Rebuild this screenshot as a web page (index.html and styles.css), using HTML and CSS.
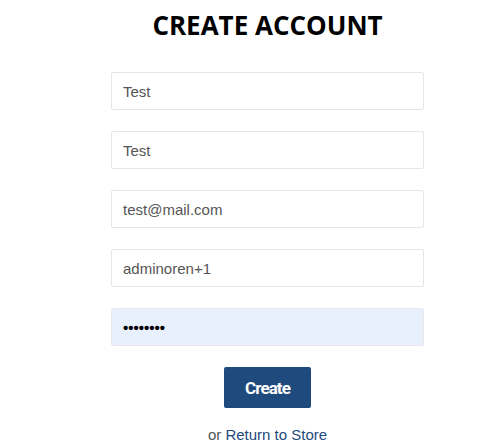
FILE: index.html
```html
<!DOCTYPE html>
<html>
<head>
<meta charset="utf-8">
<link rel="stylesheet" href="styles.css">
</head>
<body>
<div class="page">
  <form class="form">
    <h1 class="title">CREATE ACCOUNT</h1>
    <div class="field">Test</div>
    <div class="field">Test</div>
    <div class="field">test@mail.com</div>
    <div class="field">adminoren+1</div>
    <div class="field field-pass">&bull;&bull;&bull;&bull;&bull;&bull;&bull;&bull;</div>
    <button type="button" class="btn">Create</button>
    <p class="alt">or <a class="alt-link" href="#">Return to Store</a></p>
  </form>
</div>
</body>
</html>
```

FILE: styles.css
```css
html, body {
  margin: 0;
  padding: 0;
  background: #ffffff;
}
.page {
  padding: 7px 0 0 111px;
}
.form {
  width: 313px;
  display: flex;
  flex-direction: column;
  align-items: center;
  margin: 0;
}
.title {
  margin: 0 0 29px 0;
  font-family: "Open Sans", sans-serif;
  font-weight: 700;
  font-size: 26px;
  line-height: 36px;
  color: #000;
  white-space: nowrap;
}
.field {
  box-sizing: border-box;
  width: 313px;
  height: 38px;
  margin-bottom: 21px;
  border: 1px solid #e6e6e6;
  border-radius: 2px;
  padding: 0 11px;
  display: flex;
  align-items: center;
  font-family: "Liberation Sans", Arial, sans-serif;
  font-size: 15px;
  color: #555555;
}
.field-pass {
  background: #e8f0fe;
  border-color: #e8e8ec;
  color: #000;
  font-size: 15px;
  font-weight: 700;
}
.btn {
  width: 87px;
  height: 41px;
  border: none;
  border-radius: 2px;
  background: #1f4a7e;
  color: #ffffff;
  font-family: Roboto, "DejaVu Sans Condensed", sans-serif;
  font-weight: 700;
  font-size: 17px;
  letter-spacing: -0.9px;
  padding: 0;
  margin: 0 0 18px 0;
  cursor: pointer;
}
.alt {
  margin: 0;
  font-family: "Liberation Sans", Arial, sans-serif;
  font-size: 15px;
  line-height: 17px;
  color: #555555;
}
.alt-link {
  color: #1f4a7e;
  text-decoration: none;
}
```
